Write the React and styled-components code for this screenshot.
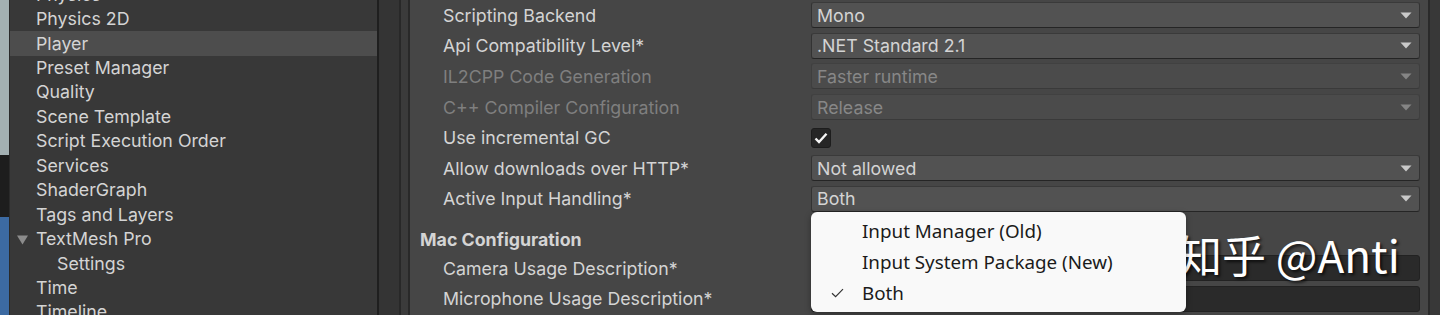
import React from 'react';
import { styled, createGlobalStyle } from 'styled-components';

const GlobalStyle = createGlobalStyle`
	html, body {
		margin: 0;
		padding: 0;
		background: #383838;
		overflow: hidden;
	}
	body {
		font-family: Inter, "Noto Sans", sans-serif;
	}
`;

const sidebarItems = [
	{ label: 'Physics' },
	{ label: 'Physics 2D' },
	{ label: 'Player', active: true },
	{ label: 'Preset Manager' },
	{ label: 'Quality' },
	{ label: 'Scene Template' },
	{ label: 'Script Execution Order' },
	{ label: 'Services' },
	{ label: 'ShaderGraph' },
	{ label: 'Tags and Layers' },
	{ label: 'TextMesh Pro', expanded: true },
	{ label: 'Settings', child: true },
	{ label: 'Time' },
	{ label: 'Timeline' },
];

const topRows = [
	{ label: 'Scripting Backend', kind: 'select', value: 'Mono' },
	{ label: 'Api Compatibility Level*', kind: 'select', value: '.NET Standard 2.1' },
	{ label: 'IL2CPP Code Generation', kind: 'select', value: 'Faster runtime', disabled: true },
	{ label: 'C++ Compiler Configuration', kind: 'select', value: 'Release', disabled: true },
	{ label: 'Use incremental GC', kind: 'check' },
	{ label: 'Allow downloads over HTTP*', kind: 'select', value: 'Not allowed' },
	{ label: 'Active Input Handling*', kind: 'select', value: 'Both', open: true },
];

const macRows = ['Camera Usage Description*', 'Microphone Usage Description*'];

const menuOptions = ['Input Manager (Old)', 'Input System Package (New)', 'Both'];

function Arrow({ disabled }) {
	return (
		<StArrow width="12" height="7" viewBox="0 0 12 7">
			<path d="M0.5 0.5 L11.5 0.5 L6 6.5 Z" fill={disabled ? '#858585' : '#c9c9c9'} />
		</StArrow>
	);
}

function Select({ value, disabled, open }) {
	return (
		<StSelect disabled={disabled}>
			<StSelectText disabled={disabled}>{value}</StSelectText>
			<Arrow disabled={disabled} />
			{open && (
				<StMenu>
					{menuOptions.map(opt => (
						<StMenuItem key={opt}>
							<StMenuCheck>
								{opt === value && (
									<svg width="13" height="10" viewBox="0 0 13 10">
										<path d="M1 5.2 L4.6 8.6 L12 1.2" fill="none" stroke="#333" strokeWidth="1.2" />
									</svg>
								)}
							</StMenuCheck>
							{opt}
						</StMenuItem>
					))}
				</StMenu>
			)}
		</StSelect>
	);
}

function App() {
	return (
		<StPage>
			<GlobalStyle />
			<StBackWindow>
				<StBackBlock color="#a3b0b2" grow={155} />
				<StBackBlock color="#1d1d1d" grow={62} />
				<StBackBlock color="#3c6aa2" grow={98} />
			</StBackWindow>

			<StSidebar>
				<StSideList>
					{sidebarItems.map(item => (
						<StSideItem key={item.label} active={item.active} child={item.child}>
							{item.expanded && (
								<StFold width="11" height="10" viewBox="0 0 11 10">
									<path d="M0 0.5 L11 0.5 L5.5 9.5 Z" fill="#8c8c8c" />
								</StFold>
							)}
							{item.label}
						</StSideItem>
					))}
				</StSideList>
			</StSidebar>

			<StSplitter>
				<StGutter />
			</StSplitter>

			<StInspector>
				{topRows.map(row => (
					<StRow key={row.label}>
						<StLabel disabled={row.disabled}>{row.label}</StLabel>
						{row.kind === 'check' ? (
							<StCheckbox>
								<svg width="14" height="12" viewBox="0 0 14 12">
									<path d="M1.5 6.5 L5 10 L12.5 1.8" fill="none" stroke="#f6f6f6" strokeWidth="2.4" />
								</svg>
							</StCheckbox>
						) : (
							<Select value={row.value} disabled={row.disabled} open={row.open} />
						)}
					</StRow>
				))}

				<StSection>Mac Configuration</StSection>
				{macRows.map(label => (
					<StRow key={label}>
						<StLabel>{label}</StLabel>
						<StTextField />
					</StRow>
				))}

				<StWatermark>知乎 @Anti</StWatermark>
			</StInspector>

			<StRightEdge />
		</StPage>
	);
}

export default App;

const StPage = styled.div`
	display: flex;
	width: 1440px;
	height: 315px;
	overflow: hidden;
	background: #383838;
`;

const StBackWindow = styled.div`
	display: flex;
	flex-direction: column;
	width: 10px;
	flex-shrink: 0;
	border-right: 1px solid #2a2a2a;
	box-sizing: border-box;
`;

const StBackBlock = styled.div`
	flex: ${props => props.grow} 0 0;
	background: ${props => props.color};
`;

const StSidebar = styled.div`
	width: 367px;
	flex-shrink: 0;
	background: #383838;
	border-right: 2px solid #1f1f1f;
	overflow: hidden;
`;

const StSideList = styled.div`
	display: flex;
	flex-direction: column;
	margin-top: -17.6px;
`;

const StSideItem = styled.div`
	display: flex;
	align-items: center;
	position: relative;
	height: 24.45px;
	flex-shrink: 0;
	padding-left: ${props => (props.child ? '47px' : '26px')};
	font-size: 17.8px;
	line-height: 1;
	color: #d4d4d4;
	background: ${props => (props.active ? '#4d4d4d' : 'transparent')};
	white-space: nowrap;
`;

const StFold = styled.svg`
	position: absolute;
	left: 7px;
	top: 8px;
`;

const StSplitter = styled.div`
	display: flex;
	width: 31px;
	flex-shrink: 0;
	background: #343434;
	border-right: 2px solid #292929;
	box-sizing: border-box;
	justify-content: flex-end;
`;

const StGutter = styled.div`
	width: 7px;
	background: #3b3b3b;
	border-left: 2px solid #282828;
`;

const StInspector = styled.div`
	position: relative;
	display: flex;
	flex-direction: column;
	width: 1018px;
	flex-shrink: 0;
	background: #464646;
	padding-left: 10px;
	padding-right: 8px;
	box-sizing: border-box;
`;

const StRow = styled.div`
	display: grid;
	grid-template-columns: 368px 1fr;
	align-items: center;
	height: 30.6px;
	flex-shrink: 0;
	padding-left: 23px;
`;

const StLabel = styled.div`
	font-size: 17.8px;
	color: ${props => (props.disabled ? '#7f7f7f' : '#d4d4d4')};
	white-space: nowrap;
`;

const StSelect = styled.div`
	position: relative;
	display: flex;
	align-items: center;
	justify-content: space-between;
	height: 24px;
	padding: 0 6px 0 5px;
	border-radius: 3px;
	background: ${props => (props.disabled ? '#4b4b4b' : '#525252')};
	border: 1px solid ${props => (props.disabled ? '#3f3f3f' : '#333333')};
	border-top-color: ${props => (props.disabled ? '#414141' : '#3a3a3a')};
	border-bottom-color: ${props => (props.disabled ? '#3a3a3a' : '#252525')};
`;

const StSelectText = styled.span`
	font-size: 17.8px;
	color: ${props => (props.disabled ? '#878787' : '#d4d4d4')};
`;

const StArrow = styled.svg`
	margin-right: 1px;
`;

const StCheckbox = styled.div`
	display: flex;
	align-items: center;
	justify-content: center;
	width: 20px;
	height: 20px;
	border-radius: 3px;
	background: #262626;
	border: 1px solid #1d1d1d;
	box-sizing: border-box;
`;

const StSection = styled.div`
	display: flex;
	align-items: center;
	height: 27.6px;
	padding-top: 12px;
	margin-bottom: -1px;
	flex-shrink: 0;
	font-size: 17.8px;
	font-weight: 700;
	color: #d4d4d4;
`;

const StTextField = styled.div`
	height: 26px;
	border-radius: 3px;
	background: #2a2a2a;
	border: 1px solid #222222;
	box-sizing: border-box;
`;

const StMenu = styled.div`
	position: absolute;
	top: 25px;
	left: -1px;
	z-index: 3;
	width: 375px;
	padding: 3.5px 0;
	border-radius: 6px;
	background: #f9f9f9;
	box-shadow: 0 2px 6px rgba(0, 0, 0, 0.35);
	box-sizing: border-box;
`;

const StMenuItem = styled.div`
	display: flex;
	align-items: center;
	height: 31px;
	font-family: "Noto Sans", "Open Sans", sans-serif;
	font-size: 18.8px;
	color: #1b1b1b;
`;

const StMenuCheck = styled.span`
	display: flex;
	align-items: center;
	justify-content: center;
	width: 51px;
	padding-left: 2px;
	box-sizing: border-box;
`;

const StWatermark = styled.div`
	position: absolute;
	left: 768px;
	top: 222px;
	z-index: 2;
	font-family: "Noto Sans CJK SC", "Noto Sans", sans-serif;
	font-size: 44px;
	color: #ffffff;
	text-shadow: 2px 2px 3px rgba(0, 0, 0, 0.7);
	white-space: nowrap;
	pointer-events: none;
`;

const StRightEdge = styled.div`
	flex: 1;
	background: #383838;
	border-left: 2px solid #2a2a2a;
`;
